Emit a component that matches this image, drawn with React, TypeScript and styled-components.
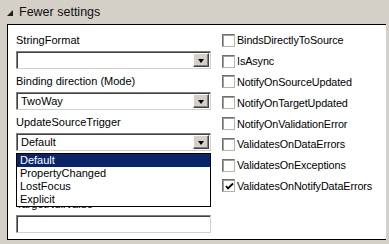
import React from 'react'
import styled, { createGlobalStyle } from 'styled-components'

const GlobalStyle = createGlobalStyle`
  html, body {
    margin: 0;
    padding: 0;
    background: #d4d0c8;
  }
`

const leftFields = [
  { label: 'StringFormat', kind: 'combo', value: '' },
  { label: 'Binding direction (Mode)', kind: 'combo', value: 'TwoWay' },
  { label: 'UpdateSourceTrigger', kind: 'combo', value: 'Default', open: true },
  { label: 'FallbackValue', kind: 'text', value: '' },
  { label: 'TargetNullValue', kind: 'text', value: '' },
]

const triggerOptions = ['Default', 'PropertyChanged', 'LostFocus', 'Explicit']

const flags = [
  { name: 'BindsDirectlyToSource', checked: false },
  { name: 'IsAsync', checked: false },
  { name: 'NotifyOnSourceUpdated', checked: false },
  { name: 'NotifyOnTargetUpdated', checked: false },
  { name: 'NotifyOnValidationError', checked: false },
  { name: 'ValidatesOnDataErrors', checked: false },
  { name: 'ValidatesOnExceptions', checked: false },
  { name: 'ValidatesOnNotifyDataErrors', checked: true },
]

export default function App() {
  return (
    <Window>
      <GlobalStyle />
      <Header>
        <Expander />
        <HeaderTitle>Fewer settings</HeaderTitle>
      </Header>
      <Panel>
        <LeftColumn>
          {leftFields.map((f) => (
            <Field key={f.label}>
              <Label>{f.label}</Label>
              {f.kind === 'combo' ? (
                <Combo>
                  <ComboText>{f.value}</ComboText>
                  <DropButton>
                    <Arrow />
                  </DropButton>
                  {f.open && (
                    <Popup>
                      {triggerOptions.map((o, i) => (
                        <Option key={o} selected={i === 0}>
                          {o}
                        </Option>
                      ))}
                    </Popup>
                  )}
                </Combo>
              ) : (
                <TextBox />
              )}
            </Field>
          ))}
        </LeftColumn>
        <RightColumn>
          {flags.map((f) => (
            <CheckRow key={f.name}>
              <CheckBox>
                {f.checked && (
                  <svg width="9" height="9" viewBox="0 0 9 9">
                    <path d="M1 4 L3 6.5 L8 1.5" stroke="#000" strokeWidth="1.8" fill="none" />
                  </svg>
                )}
              </CheckBox>
              <CheckLabel>{f.name}</CheckLabel>
            </CheckRow>
          ))}
        </RightColumn>
      </Panel>
    </Window>
  )
}

const Window = styled.div`
  width: 389px;
  height: 244px;
  background: #d4d0c8;
  font-family: Tahoma, 'Liberation Sans', Arial, sans-serif;
  font-size: 11px;
  color: #000;
  overflow: hidden;
  display: flex;
  flex-direction: column;
`

const Header = styled.div`
  height: 24px;
  display: flex;
  align-items: center;
  padding-left: 7px;
  gap: 6px;
`

const Expander = styled.div`
  width: 0;
  height: 0;
  border-left: 6px solid transparent;
  border-bottom: 6px solid #202020;
  margin-top: 1px;
`

const HeaderTitle = styled.span`
  font-size: 12.5px;
  color: #111;
`

const Panel = styled.div`
  height: 216px;
  box-sizing: border-box;
  margin: 0 3px 0 7px;
  background: #fff;
  border: 1px solid #000;
  border-right: none;
  display: grid;
  grid-template-columns: 195px 1fr;
  column-gap: 11px;
  padding: 8px 0 0 8px;
`

const LeftColumn = styled.div`
  display: flex;
  flex-direction: column;
  gap: 5px;
`

const Field = styled.div`
  display: flex;
  flex-direction: column;
`

const Label = styled.div`
  height: 15px;
  line-height: 15px;
  margin-bottom: 3px;
  white-space: nowrap;
`

const Combo = styled.div`
  position: relative;
  height: 18px;
  box-sizing: border-box;
  border: 1px solid;
  border-color: #808080 #d4d0c8 #d4d0c8 #808080;
  box-shadow: inset 1px 1px #404040;
  background: #fff;
  display: flex;
  align-items: center;
  padding: 1px 1px 1px 4px;
`

const ComboText = styled.span`
  flex: 1;
  line-height: 14px;
`

const DropButton = styled.div`
  width: 16px;
  height: 14px;
  box-sizing: border-box;
  background: #d4d0c8;
  border: 1px solid;
  border-color: #fff #404040 #404040 #fff;
  box-shadow: inset -1px -1px #808080;
  display: flex;
  align-items: center;
  justify-content: center;
`

const Arrow = styled.div`
  width: 0;
  height: 0;
  border-left: 3.5px solid transparent;
  border-right: 3.5px solid transparent;
  border-top: 4px solid #000;
  margin-top: 1px;
`

const Popup = styled.div`
  position: absolute;
  left: -1px;
  top: 19px;
  width: 195px;
  box-sizing: border-box;
  border: 1px solid #000;
  background: #fff;
  z-index: 2;
`

const Option = styled.div<{ selected?: boolean }>`
  height: 13px;
  line-height: 13px;
  padding-left: 3px;
  background: ${(p) => (p.selected ? '#0a246a' : '#fff')};
  color: ${(p) => (p.selected ? '#fff' : '#000')};
`

const TextBox = styled.div`
  height: 18px;
  box-sizing: border-box;
  border: 1px solid;
  border-color: #808080 #d4d0c8 #d4d0c8 #808080;
  box-shadow: inset 1px 1px #404040;
  background: #fff;
`

const RightColumn = styled.div`
  display: flex;
  flex-direction: column;
  margin-top: -3px;
`

const CheckRow = styled.div`
  height: 20.8px;
  display: flex;
  align-items: center;
  gap: 2px;
  font-size: 10.8px;
`

const CheckBox = styled.div`
  width: 13px;
  height: 13px;
  box-sizing: border-box;
  border: 1px solid;
  border-color: #707070 #b8b4ac #b8b4ac #707070;
  box-shadow: inset 1px 1px #a0a0a0;
  background: #fff;
  display: flex;
  align-items: center;
  justify-content: center;
  padding: 1px 0 0 1px;
`

const CheckLabel = styled.span`
  white-space: nowrap;
  letter-spacing: -0.1px;
`
